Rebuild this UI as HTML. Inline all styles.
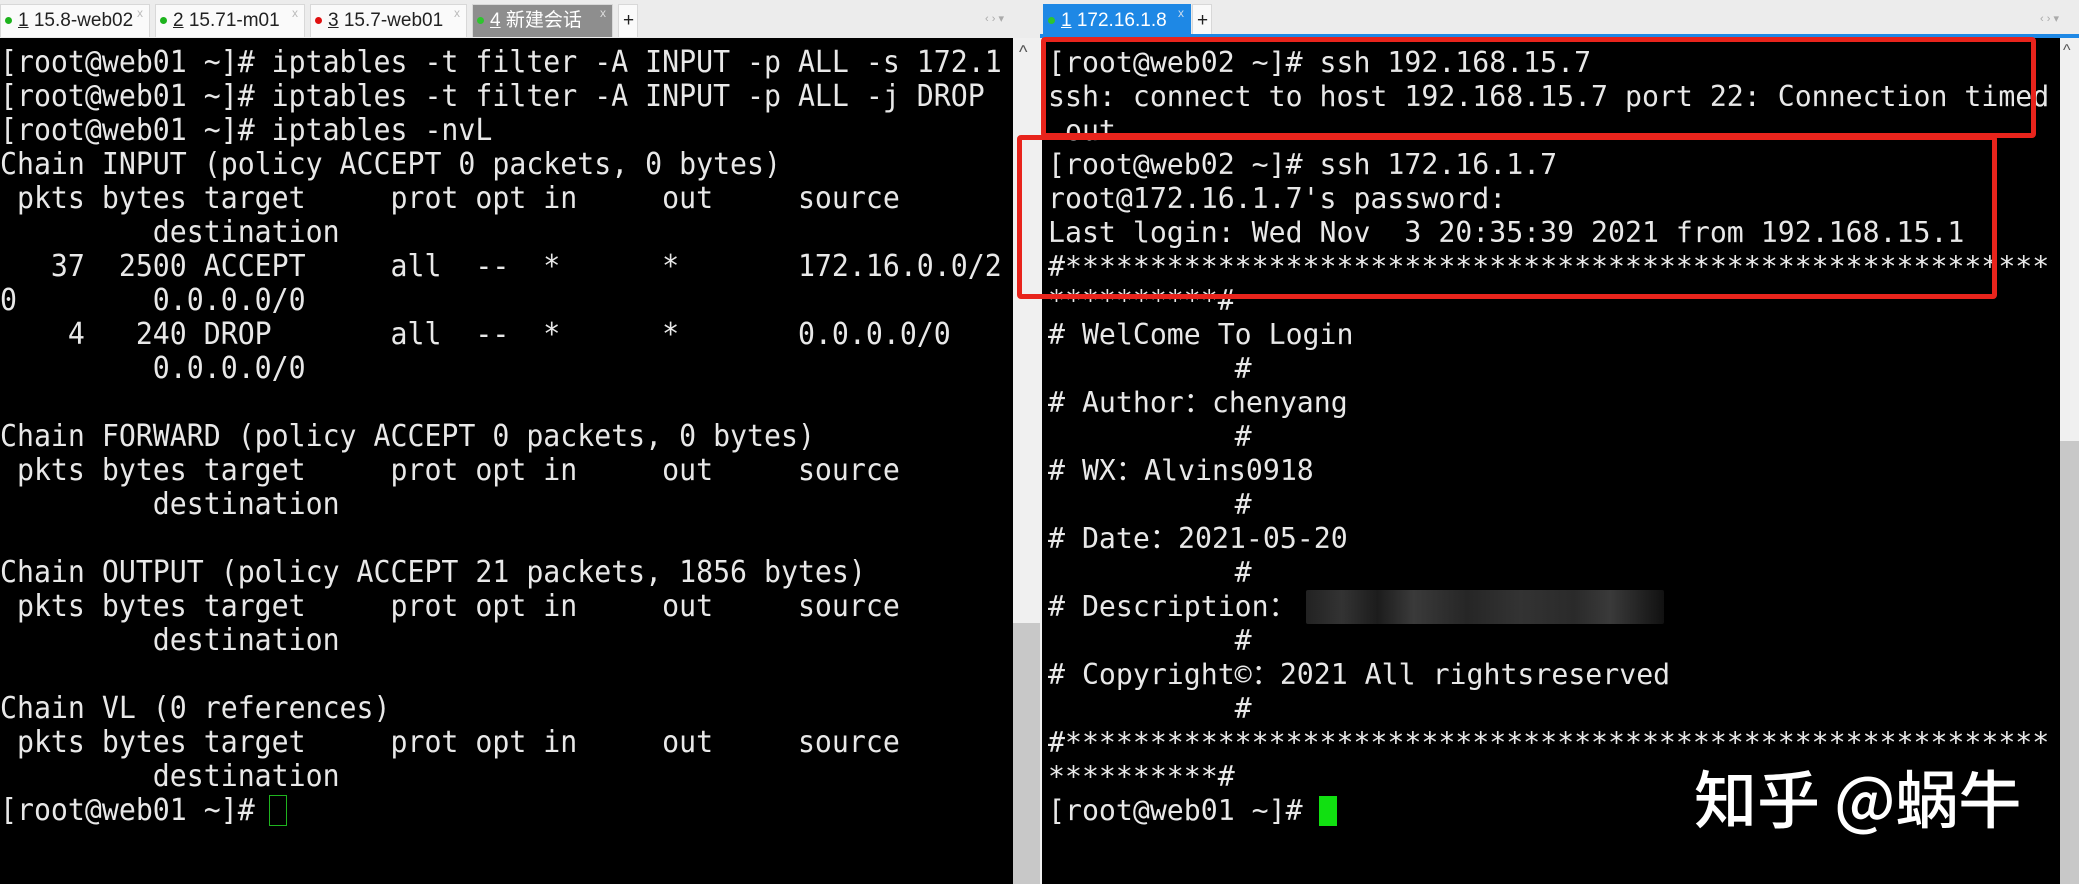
<!DOCTYPE html>
<html><head><meta charset="utf-8"><style>
*{margin:0;padding:0;box-sizing:border-box}
body{width:2079px;height:884px;overflow:hidden;background:#f0f0f0;position:relative;font-family:"Liberation Sans","Noto Sans CJK SC",sans-serif}
.bar{position:absolute;top:0;height:38px;background:#ececec}
.tab{position:absolute;top:4px;height:33px;background:#fafafa;border:1px solid #d8d8d8;border-bottom:none;font-size:19px;line-height:32px;padding-left:4px;color:#222;white-space:nowrap;font-family:"Liberation Sans Narrow","Liberation Sans","Noto Sans CJK SC",sans-serif}
.tab u{text-decoration:underline}
.dot{display:inline-block;width:7px;height:7px;border-radius:50%;margin-right:6px;vertical-align:middle}
.x{position:absolute;top:-8px;right:6px;font-size:12px;color:#bbb}
.term{position:absolute;top:38px;background:#000;overflow:hidden}
pre{position:absolute;margin:0;color:#e8e8e8;white-space:pre;line-height:34px}
.l{font-family:"DejaVu Sans Mono",monospace;font-size:30px;transform:scaleX(.94);transform-origin:left top;left:0;top:8px}
.r{font-family:"DejaVu Sans Mono","Noto Sans CJK SC",monospace;font-size:28.2px;left:6px;top:8px}
.sb{position:absolute;top:38px;background:#f0f0f0}
.red{position:absolute;border:5px solid #e8241c;border-radius:4px}
</style></head><body>
<div class="bar" style="left:0;width:1040px"></div>
<div class="bar" style="left:1040px;width:1039px"></div>
<div class="tab" style="left:0;width:150px"><span class="dot" style="background:#1db31d"></span><u>1</u> 15.8-web02<span class="x">x</span></div>
<div class="tab" style="left:155px;width:150px"><span class="dot" style="background:#1db31d"></span><u>2</u> 15.71-m01<span class="x">x</span></div>
<div class="tab" style="left:310px;width:157px"><span class="dot" style="background:#e01010"></span><u>3</u> 15.7-web01<span class="x">x</span></div>
<div class="tab" style="left:472px;width:141px;background:#8e8e8e;color:#fff"><span class="dot" style="background:#2ec52e"></span><u>4</u> 新建会话<span class="x" style="color:#ddd">x</span></div>
<div class="tab" style="left:618px;width:20px;padding-left:4px">+</div>
<div style="position:absolute;left:985px;top:12px;font-size:11px;color:#aaa">‹ › ▾</div>
<div class="tab" style="left:1043px;width:148px;background:#1e88e5;color:#fff;border-color:#1e88e5"><span class="dot" style="background:#2ec52e"></span><u>1</u> 172.16.1.8<span class="x" style="color:#cde">x</span></div>
<div class="tab" style="left:1192px;width:20px;padding-left:4px">+</div>
<div style="position:absolute;left:2040px;top:12px;font-size:11px;color:#aaa">‹ › ▾</div>
<div style="position:absolute;left:1040px;top:34px;width:1039px;height:4px;background:#1e88e5"></div>

<div class="term" style="left:0;width:1013px;height:846px">
<pre class="l">[root@web01 ~]# iptables -t filter -A INPUT -p ALL -s 172.1
[root@web01 ~]# iptables -t filter -A INPUT -p ALL -j DROP
[root@web01 ~]# iptables -nvL
Chain INPUT (policy ACCEPT 0 packets, 0 bytes)
 pkts bytes target     prot opt in     out     source
         destination
   37  2500 ACCEPT     all  --  *      *       172.16.0.0/2
0        0.0.0.0/0
    4   240 DROP       all  --  *      *       0.0.0.0/0
         0.0.0.0/0

Chain FORWARD (policy ACCEPT 0 packets, 0 bytes)
 pkts bytes target     prot opt in     out     source
         destination

Chain OUTPUT (policy ACCEPT 21 packets, 1856 bytes)
 pkts bytes target     prot opt in     out     source
         destination

Chain VL (0 references)
 pkts bytes target     prot opt in     out     source
         destination
[root@web01 ~]# </pre>
<div style="position:absolute;left:269px;top:757px;width:18px;height:31px;border:1px solid #1fb31f"></div>
</div>
<div class="sb" style="left:1013px;width:27px;height:846px"><div style="position:absolute;left:6px;top:4px;font-size:18px;color:#555">^</div><div style="position:absolute;left:0;top:585px;width:27px;height:261px;background:#c8c8c8"></div></div>

<div class="term" style="left:1042px;width:1018px;height:846px">
<pre class="r">[root@web02 ~]# ssh 192.168.15.7
ssh: connect to host 192.168.15.7 port 22: Connection timed
 out
[root@web02 ~]# ssh 172.16.1.7
root@172.16.1.7's password:
Last login: Wed Nov  3 20:35:39 2021 from 192.168.15.1
#**********************************************************
**********#
# WelCome To Login
           #
# Author：chenyang
           #
# WX：Alvins0918
           #
# Date：2021-05-20
           #
# Description：
           #
# Copyright©：2021 All rightsreserved
           #
#**********************************************************
**********#
[root@web01 ~]# </pre>
<div style="position:absolute;left:264px;top:552px;width:358px;height:34px;background:linear-gradient(90deg,#222 0,#333 10%,#1c1c1c 20%,#3a3a3a 30%,#262626 45%,#333 60%,#2a2a2a 75%,#3a3a3a 85%,#111 100%);border-radius:2px"></div>
<div style="position:absolute;left:277px;top:758px;width:18px;height:30px;background:#11e011"></div>
<div style="position:absolute;left:652px;top:722px;font-family:'Noto Sans CJK SC',sans-serif;font-size:63px;font-weight:500;color:#fff;line-height:74px;white-space:nowrap">知乎 @蜗牛</div>
</div>
<div class="sb" style="left:2060px;width:19px;height:846px"><div style="position:absolute;left:3px;top:4px;font-size:16px;color:#555">^</div><div style="position:absolute;left:0;top:403px;width:19px;height:443px;background:#c8c8c8"></div></div>

<div class="red" style="left:1041px;top:37px;width:995px;height:101px"></div>
<div class="red" style="left:1017px;top:135px;width:980px;height:164px"></div>
</body></html>
